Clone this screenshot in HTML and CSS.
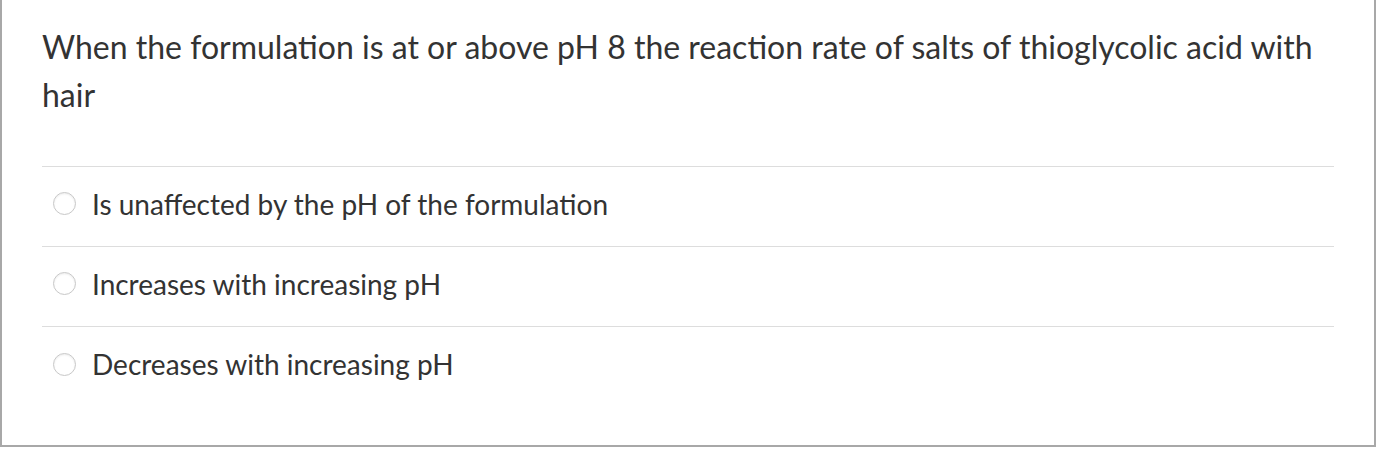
FILE: index.html
```html
<!DOCTYPE html>
<html>
<head>
<meta charset="utf-8">
<link rel="stylesheet" href="styles.css">
</head>
<body>
<div class="question">
  <div class="question-text">When the formulation is at or above pH 8 the reaction rate of salts of thioglycolic acid with hair</div>
  <div class="answers">
    <div class="answer"><span class="radio"></span><span class="label">Is unaffected by the pH of the formulation</span></div>
    <div class="answer"><span class="radio"></span><span class="label">Increases with increasing pH</span></div>
    <div class="answer"><span class="radio"></span><span class="label">Decreases with increasing pH</span></div>
  </div>
</div>
</body>
</html>
```
FILE: styles.css
```css
html, body { margin: 0; padding: 0; background: #fff; }
body { font-family: Lato, "Noto Sans", sans-serif; color: #333; }
.question {
  width: 1376px;
  height: 447px;
  box-sizing: border-box;
  border: 2px solid #a8a8a8;
  border-top: none;
  padding: 23px 40px 0 40px;
}
.question-text {
  font-size: 32px;
  line-height: 48px;
  color: #333;
  padding-bottom: 47px;
  border-bottom: 1px solid #ddd;
}
.answer {
  display: flex;
  align-items: center;
  box-sizing: border-box;
  height: 80px;
  padding-bottom: 6px;
  border-bottom: 1px solid #ddd;
}
.answer:last-child { border-bottom: none; }
.radio {
  width: 21px;
  height: 21px;
  border-radius: 50%;
  border: 1px solid #c8c8c8;
  box-shadow: inset 0 1px 2px rgba(0,0,0,0.08);
  margin-left: 11px;
  margin-right: 16px;
  flex: none;
}
.label { font-size: 28px; color: #333; }
```
